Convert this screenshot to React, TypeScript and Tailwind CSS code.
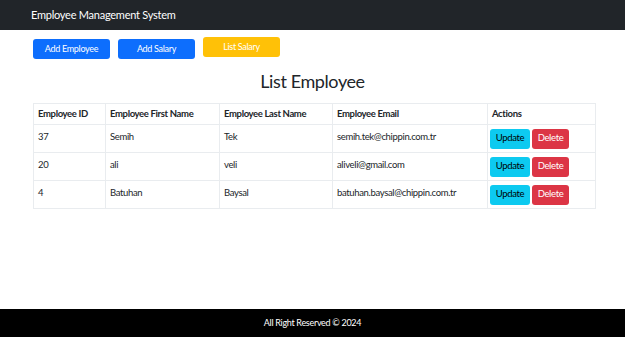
import React from "react";

const employees = [
  { id: 37, first: "Semih", last: "Tek", email: "semih.tek@chippin.com.tr" },
  { id: 20, first: "ali", last: "veli", email: "aliveli@gmail.com" },
  { id: 4, first: "Batuhan", last: "Baysal", email: "batuhan.baysal@chippin.com.tr" },
];

export default function App() {
  return (
    <div
      className="flex h-[337px] w-[625px] flex-col bg-white text-[#212529]"
      style={{ fontFamily: 'Lato, "Open Sans", sans-serif' }}
    >
      {/* Navbar */}
      <header className="flex h-[30px] items-center bg-[#212529] px-[31px]">
        <span className="text-[11px] tracking-[-0.25px] text-white">Employee Management System</span>
      </header>

      <main className="flex-1 px-[33px]">
        <div className="mt-[7px] flex items-start gap-[8px]">
          <button className="mt-[2px] h-[20px] w-[77px] rounded-[3px] bg-[#0d6efd] text-[9px] tracking-[-0.3px] text-white">
            Add Employee
          </button>
          <button className="mt-[2px] h-[20px] w-[77px] rounded-[3px] bg-[#0d6efd] text-[9px] tracking-[-0.3px] text-white">
            Add Salary
          </button>
          <button className="h-[20px] w-[77px] rounded-[3px] bg-[#ffc107] text-[9px] tracking-[-0.3px] text-white">
            List Salary
          </button>
        </div>

        <h2 className="mt-[9px] text-center text-[18px] leading-[26px] tracking-[-0.4px]">List Employee</h2>

        <table className="mt-[9px] w-[563px] border-collapse text-[9.5px] tracking-[-0.35px]">
          <thead>
            <tr className="h-[21px]">
              <th className="w-[72px] border border-[#e9ecef] px-[4px] text-left font-bold">Employee ID</th>
              <th className="w-[114px] border border-[#e9ecef] px-[4px] text-left font-bold">Employee First Name</th>
              <th className="w-[113px] border border-[#e9ecef] px-[4px] text-left font-bold">Employee Last Name</th>
              <th className="w-[155px] border border-[#e9ecef] px-[4px] text-left font-bold">Employee Email</th>
              <th className="border border-[#e9ecef] px-[4px] text-left font-bold">Actions</th>
            </tr>
          </thead>
          <tbody>
            {employees.map((e) => (
              <tr key={e.id} className="h-[28px]">
                <td className="border border-[#e9ecef] px-[4px] pt-[5px] align-top">{e.id}</td>
                <td className="border border-[#e9ecef] px-[4px] pt-[5px] align-top">{e.first}</td>
                <td className="border border-[#e9ecef] px-[4px] pt-[5px] align-top">{e.last}</td>
                <td className="border border-[#e9ecef] px-[4px] pt-[5px] align-top">{e.email}</td>
                <td className="border border-[#e9ecef] px-[2px] align-middle">
                  <div className="flex gap-[2px]">
                    <button className="h-[20px] w-[40px] rounded-[3px] bg-[#0dcaf0] text-[9.5px] text-black">
                      Update
                    </button>
                    <button className="h-[20px] w-[37px] rounded-[3px] bg-[#dc3545] text-[9.5px] text-white">
                      Delete
                    </button>
                  </div>
                </td>
              </tr>
            ))}
          </tbody>
        </table>
      </main>

      <footer className="flex h-[28px] items-center justify-center bg-black">
        <span className="text-[9px] tracking-[-0.3px] text-white">All Right Reserved © 2024</span>
      </footer>
    </div>
  );
}
